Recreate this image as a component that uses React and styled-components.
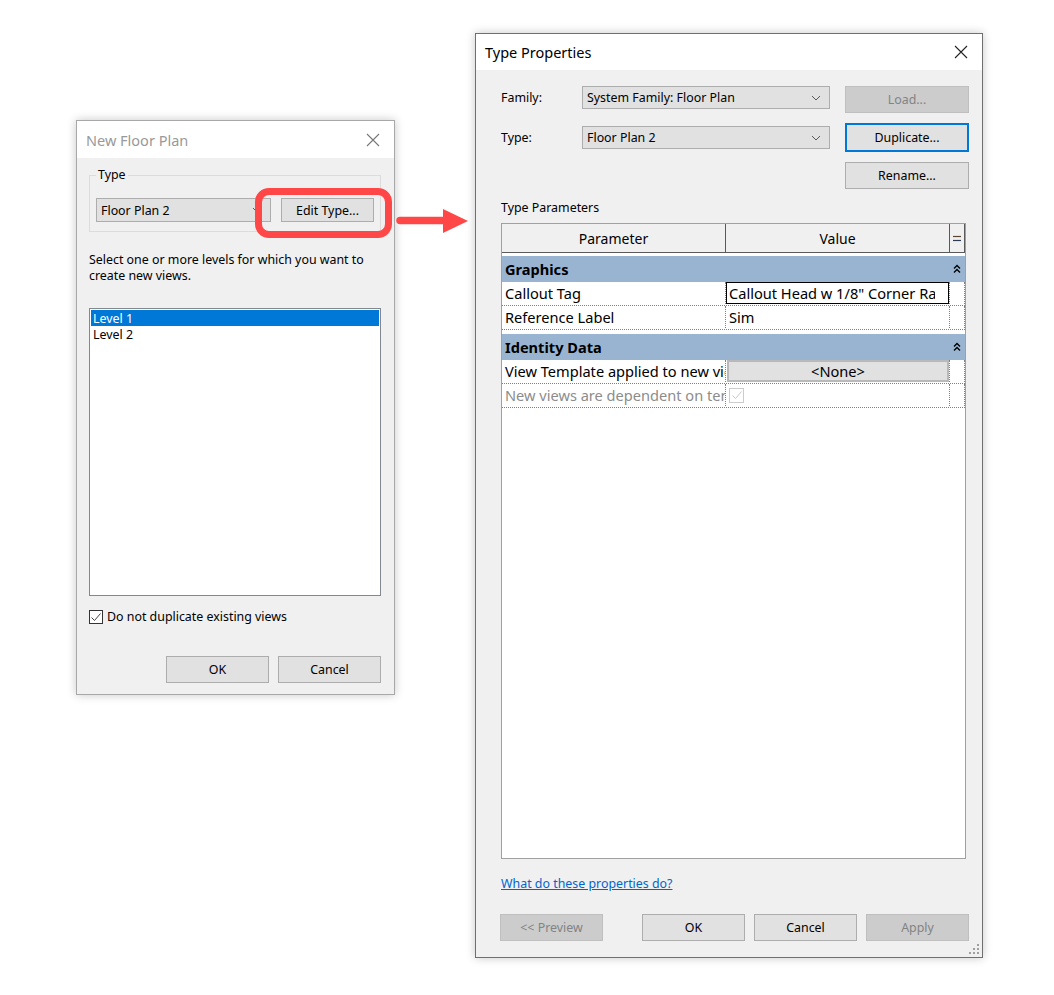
import styled, { createGlobalStyle } from "styled-components";

const GlobalStyle = createGlobalStyle`
  html, body {
    margin: 0;
    padding: 0;
    background: #ffffff;
  }
  body {
    font-family: "Noto Sans", "Open Sans", sans-serif;
    font-size: 12.4px;
    color: #000;
  }
  * {
    box-sizing: border-box;
  }
`;

const Canvas = styled.div`
  position: relative;
  width: 1054px;
  height: 995px;
  background: #ffffff;
  overflow: hidden;
`;

const Window = styled.div`
  position: absolute;
  left: ${(p) => p.$x}px;
  top: ${(p) => p.$y}px;
  width: ${(p) => p.$w}px;
  height: ${(p) => p.$h}px;
  display: flex;
  flex-direction: column;
  background: #f0f0f0;
  border: 1px solid ${(p) => (p.$active ? "#6f6f6f" : "#a8a8a8")};
  box-shadow: 0 0 9px rgba(0, 0, 0, 0.22);
`;

const TitleBar = styled.div`
  height: ${(p) => p.$h}px;
  flex-shrink: 0;
  display: flex;
  align-items: center;
  justify-content: space-between;
  background: #ffffff;
  padding: 0 14px 0 9px;
`;

const TitleText = styled.span`
  font-size: 14.5px;
  color: ${(p) => (p.$active ? "#000" : "#999")};
`;

const CloseX = ({ color }) => (
  <svg width="14" height="14" viewBox="0 0 14 14">
    <path d="M1 1 L13 13 M13 1 L1 13" stroke={color} strokeWidth="1.1" />
  </svg>
);

const Chevron = () => (
  <svg width="10" height="6" viewBox="0 0 10 6">
    <polyline points="1,1 5,5 9,1" fill="none" stroke="#5a5a5a" strokeWidth="1" />
  </svg>
);

const CheckMark = ({ color }) => (
  <svg width="12" height="12" viewBox="0 0 12 12">
    <polyline points="1.5,6.5 4.5,9.5 10.5,2.5" fill="none" stroke={color} strokeWidth="1" />
  </svg>
);

const Collapse = () => (
  <svg width="8" height="10" viewBox="0 0 8 10">
    <polyline points="1,4.5 4,1.5 7,4.5" fill="none" stroke="#000" strokeWidth="1.4" />
    <polyline points="1,8.5 4,5.5 7,8.5" fill="none" stroke="#000" strokeWidth="1.4" />
  </svg>
);

/* ---------- shared controls ---------- */

const Button = styled.div`
  width: ${(p) => p.$w || 103}px;
  height: ${(p) => p.$h || 27}px;
  display: flex;
  align-items: center;
  justify-content: center;
  font-size: 12.4px;
  background: ${(p) => (p.$disabled ? "#cccccc" : "#e1e1e1")};
  color: ${(p) => (p.$disabled ? "#838383" : "#000")};
  border: ${(p) =>
    p.$focused ? "2px solid #0078d7" : `1px solid ${p.$disabled ? "#bfbfbf" : "#adadad"}`};
  flex-shrink: 0;
`;

const Combo = styled.div`
  width: ${(p) => p.$w}px;
  height: ${(p) => p.$h}px;
  display: flex;
  align-items: center;
  justify-content: space-between;
  padding: 0 8px 0 4px;
  background: #e1e1e1;
  border: 1px solid #adadad;
  font-size: 12.4px;
  flex-shrink: 0;
`;

const CheckBox = styled.span`
  width: ${(p) => p.$size}px;
  height: ${(p) => p.$size}px;
  display: inline-flex;
  align-items: center;
  justify-content: center;
  background: #fff;
  border: 1px solid ${(p) => (p.$disabled ? "#cccccc" : "#333")};
  flex-shrink: 0;
`;

/* ---------- New Floor Plan ---------- */

const LeftBody = styled.div`
  flex: 1;
  display: flex;
  flex-direction: column;
  padding: 0 13px 11px 12px;
`;

const GroupBox = styled.fieldset`
  margin: 9px 0 0;
  padding: 0 6px 9px;
  border: 1px solid #dcdcdc;
  min-width: 0;
`;

const Legend = styled.legend`
  padding: 0 2px;
  font-size: 12.4px;
  line-height: 16px;
`;

const TypeRow = styled.div`
  display: flex;
  gap: 10px;
  margin-top: 15px;
`;

const Prompt = styled.p`
  margin: 20px 0 0;
  font-size: 12.4px;
  line-height: 16px;
  white-space: nowrap;
`;

const ListBox = styled.div`
  height: 288px;
  margin-top: 24px;
  padding: 1px;
  background: #fff;
  border: 1px solid #828790;
`;

const ListItem = styled.div`
  height: 16px;
  line-height: 17px;
  padding-left: 2px;
  font-size: 12.4px;
  background: ${(p) => (p.$selected ? "#0078d7" : "transparent")};
  color: ${(p) => (p.$selected ? "#fff" : "#000")};
`;

const CheckRow = styled.label`
  display: flex;
  align-items: center;
  gap: 4px;
  margin-top: 12px;
  font-size: 12.4px;
`;

const ButtonRow = styled.div`
  display: flex;
  justify-content: flex-end;
  gap: 9px;
  margin-top: auto;
`;

/* ---------- Type Properties ---------- */

const RightBody = styled.div`
  flex: 1;
  display: flex;
  flex-direction: column;
  padding: 0 13px 15px 25px;
`;

const TopSection = styled.div`
  display: flex;
  gap: 15px;
`;

const FieldColumn = styled.div`
  display: flex;
  flex-direction: column;
  gap: 17px;
  padding-top: 16px;
`;

const FieldRow = styled.div`
  display: flex;
  align-items: center;
`;

const FieldLabel = styled.span`
  width: 81px;
  font-size: 12.4px;
`;

const ButtonColumn = styled.div`
  display: flex;
  flex-direction: column;
  padding-top: 16px;
  gap: ${(p) => p.$gap}px;
`;

const SectionLabel = styled.div`
  margin-top: 10px;
  font-size: 12.4px;
  line-height: 17px;
`;

const Table = styled.div`
  width: 465px;
  height: 636px;
  margin-top: 7px;
  background: #fff;
  border: 1px solid #a0a0a0;
  font-size: 14.6px;
`;

const HeaderRow = styled.div`
  display: grid;
  grid-template-columns: 224px 224px 15px;
  height: 29px;
  background: #f0f0f0;
  border-bottom: 1px solid #5a5a5a;
  font-size: 14px;
`;

const HeaderCell = styled.div`
  display: flex;
  align-items: center;
  justify-content: center;
  border-right: 1px solid #5a5a5a;
`;

const Group = styled.div`
  margin-top: ${(p) => p.$gap}px;
`;

const GroupHeader = styled.div`
  height: 26px;
  display: flex;
  align-items: center;
  justify-content: space-between;
  padding: 0 4px 1px 3px;
  background: #99b4d1;
  font-weight: 700;
`;

const Row = styled.div`
  display: grid;
  grid-template-columns: 224px 224px 15px;
  height: 24px;
  padding-bottom: 1px;
  border-bottom: 1px dotted #808080;
`;

const Cell = styled.div`
  display: flex;
  align-items: center;
  padding-left: ${(p) => (p.$pad === undefined ? 3 : p.$pad)}px;
  overflow: hidden;
  white-space: nowrap;
  border-right: 1px dotted #808080;
  color: ${(p) => (p.$muted ? "#8c8c8c" : "#000")};
`;

const EditBox = styled.div`
  width: 100%;
  height: 100%;
  display: flex;
  align-items: center;
  padding: 0 13px 0 2px;
  border: 1px solid #000;
  overflow: hidden;
  white-space: nowrap;
`;

const EditText = styled.span`
  overflow: hidden;
`;

const CellButton = styled.div`
  width: 100%;
  height: 22px;
  display: flex;
  align-items: center;
  justify-content: center;
  background: #e1e1e1;
  border: 2px solid #b9b9b9;
`;

const HelpLink = styled.a`
  margin-top: 16px;
  font-size: 12.4px;
  line-height: 17px;
  color: #0066cc;
  text-decoration: underline;
  align-self: flex-start;
`;

const Footer = styled.div`
  display: flex;
  gap: 9px;
  margin-top: 22px;
  margin-left: -1px;

  & > :first-child {
    margin-right: auto;
  }
`;

/* ---------- overlays ---------- */

const Highlight = styled.div`
  position: absolute;
  left: 255px;
  top: 188px;
  width: 137px;
  height: 50px;
  border: 7px solid #ff4747;
  border-radius: 14px;
`;

const ArrowSvg = styled.svg`
  position: absolute;
  left: 390px;
  top: 204px;
`;

const Grip = styled.svg`
  position: absolute;
  right: 2px;
  bottom: 2px;
`;

const Param = ({ name, children, muted, pad }) => (
  <Row>
    <Cell $muted={muted}>{name}</Cell>
    <Cell $pad={pad}>{children}</Cell>
    <Cell />
  </Row>
);

export default function App() {
  return (
    <Canvas>
      <GlobalStyle />

      <Window $x={76} $y={120} $w={319} $h={575}>
        <TitleBar $h={37}>
          <TitleText>New Floor Plan</TitleText>
          <CloseX color="#777" />
        </TitleBar>
        <LeftBody>
          <GroupBox>
            <Legend>Type</Legend>
            <TypeRow>
              <Combo $w={175} $h={24}>
                Floor Plan 2
                <Chevron />
              </Combo>
              <Button $w={93} $h={24}>Edit Type...</Button>
            </TypeRow>
          </GroupBox>
          <Prompt>
            Select one or more levels for which you want to
            <br />
            create new views.
          </Prompt>
          <ListBox>
            <ListItem $selected>Level 1</ListItem>
            <ListItem>Level 2</ListItem>
          </ListBox>
          <CheckRow>
            <CheckBox $size={14}>
              <CheckMark color="#444" />
            </CheckBox>
            Do not duplicate existing views
          </CheckRow>
          <ButtonRow>
            <Button>OK</Button>
            <Button>Cancel</Button>
          </ButtonRow>
        </LeftBody>
      </Window>

      <Window $x={475} $y={33} $w={508} $h={925} $active>
        <TitleBar $h={36}>
          <TitleText $active>Type Properties</TitleText>
          <CloseX color="#222" />
        </TitleBar>
        <RightBody>
          <TopSection>
            <FieldColumn>
              <FieldRow>
                <FieldLabel>Family:</FieldLabel>
                <Combo $w={248} $h={23}>
                  System Family: Floor Plan
                  <Chevron />
                </Combo>
              </FieldRow>
              <FieldRow>
                <FieldLabel>Type:</FieldLabel>
                <Combo $w={248} $h={23}>
                  Floor Plan 2
                  <Chevron />
                </Combo>
              </FieldRow>
            </FieldColumn>
            <ButtonColumn $gap={10}>
              <Button $w={124} $disabled>Load...</Button>
              <Button $w={124} $h={29} $focused>Duplicate...</Button>
              <Button $w={124}>Rename...</Button>
            </ButtonColumn>
          </TopSection>

          <SectionLabel>Type Parameters</SectionLabel>
          <Table>
            <HeaderRow>
              <HeaderCell>Parameter</HeaderCell>
              <HeaderCell>Value</HeaderCell>
              <HeaderCell>
                <svg width="8" height="7" viewBox="0 0 8 7">
                  <line x1="0" y1="1.5" x2="8" y2="1.5" stroke="#5a4630" strokeWidth="1.2" />
                  <line x1="0" y1="5.5" x2="8" y2="5.5" stroke="#2a3a52" strokeWidth="1.2" />
                </svg>
              </HeaderCell>
            </HeaderRow>

            <Group $gap={3}>
              <GroupHeader>
                Graphics
                <Collapse />
              </GroupHeader>
              <Param name="Callout Tag" pad={0}>
                <EditBox>
                  <EditText>Callout Head w 1/8" Corner Radius</EditText>
                </EditBox>
              </Param>
              <Param name="Reference Label">Sim</Param>
            </Group>

            <Group $gap={4}>
              <GroupHeader>
                Identity Data
                <Collapse />
              </GroupHeader>
              <Param name="View Template applied to new views" pad={1}>
                <CellButton>&lt;None&gt;</CellButton>
              </Param>
              <Param name="New views are dependent on template" muted>
                <CheckBox $size={15} $disabled>
                  <CheckMark color="#c8c8c8" />
                </CheckBox>
              </Param>
            </Group>
          </Table>

          <HelpLink href="#">What do these properties do?</HelpLink>

          <Footer>
            <Button $disabled>&lt;&lt; Preview</Button>
            <Button>OK</Button>
            <Button>Cancel</Button>
            <Button $disabled>Apply</Button>
          </Footer>
        </RightBody>
        <Grip width="12" height="12" viewBox="0 0 12 12">
          {[[9, 1], [5, 5], [9, 5], [1, 9], [5, 9], [9, 9]].map(([x, y]) => (
            <rect key={`${x}-${y}`} x={x} y={y} width="2" height="2" fill="#a0a0a0" />
          ))}
        </Grip>
      </Window>

      <Highlight />
      <ArrowSvg width="85" height="34" viewBox="0 0 85 34">
        <line x1="10" y1="16.5" x2="56" y2="16.5" stroke="#ff4747" strokeWidth="7.5" strokeLinecap="round" />
        <polygon points="53,5 78,17 53,29" fill="#ff4747" />
      </ArrowSvg>
    </Canvas>
  );
}
